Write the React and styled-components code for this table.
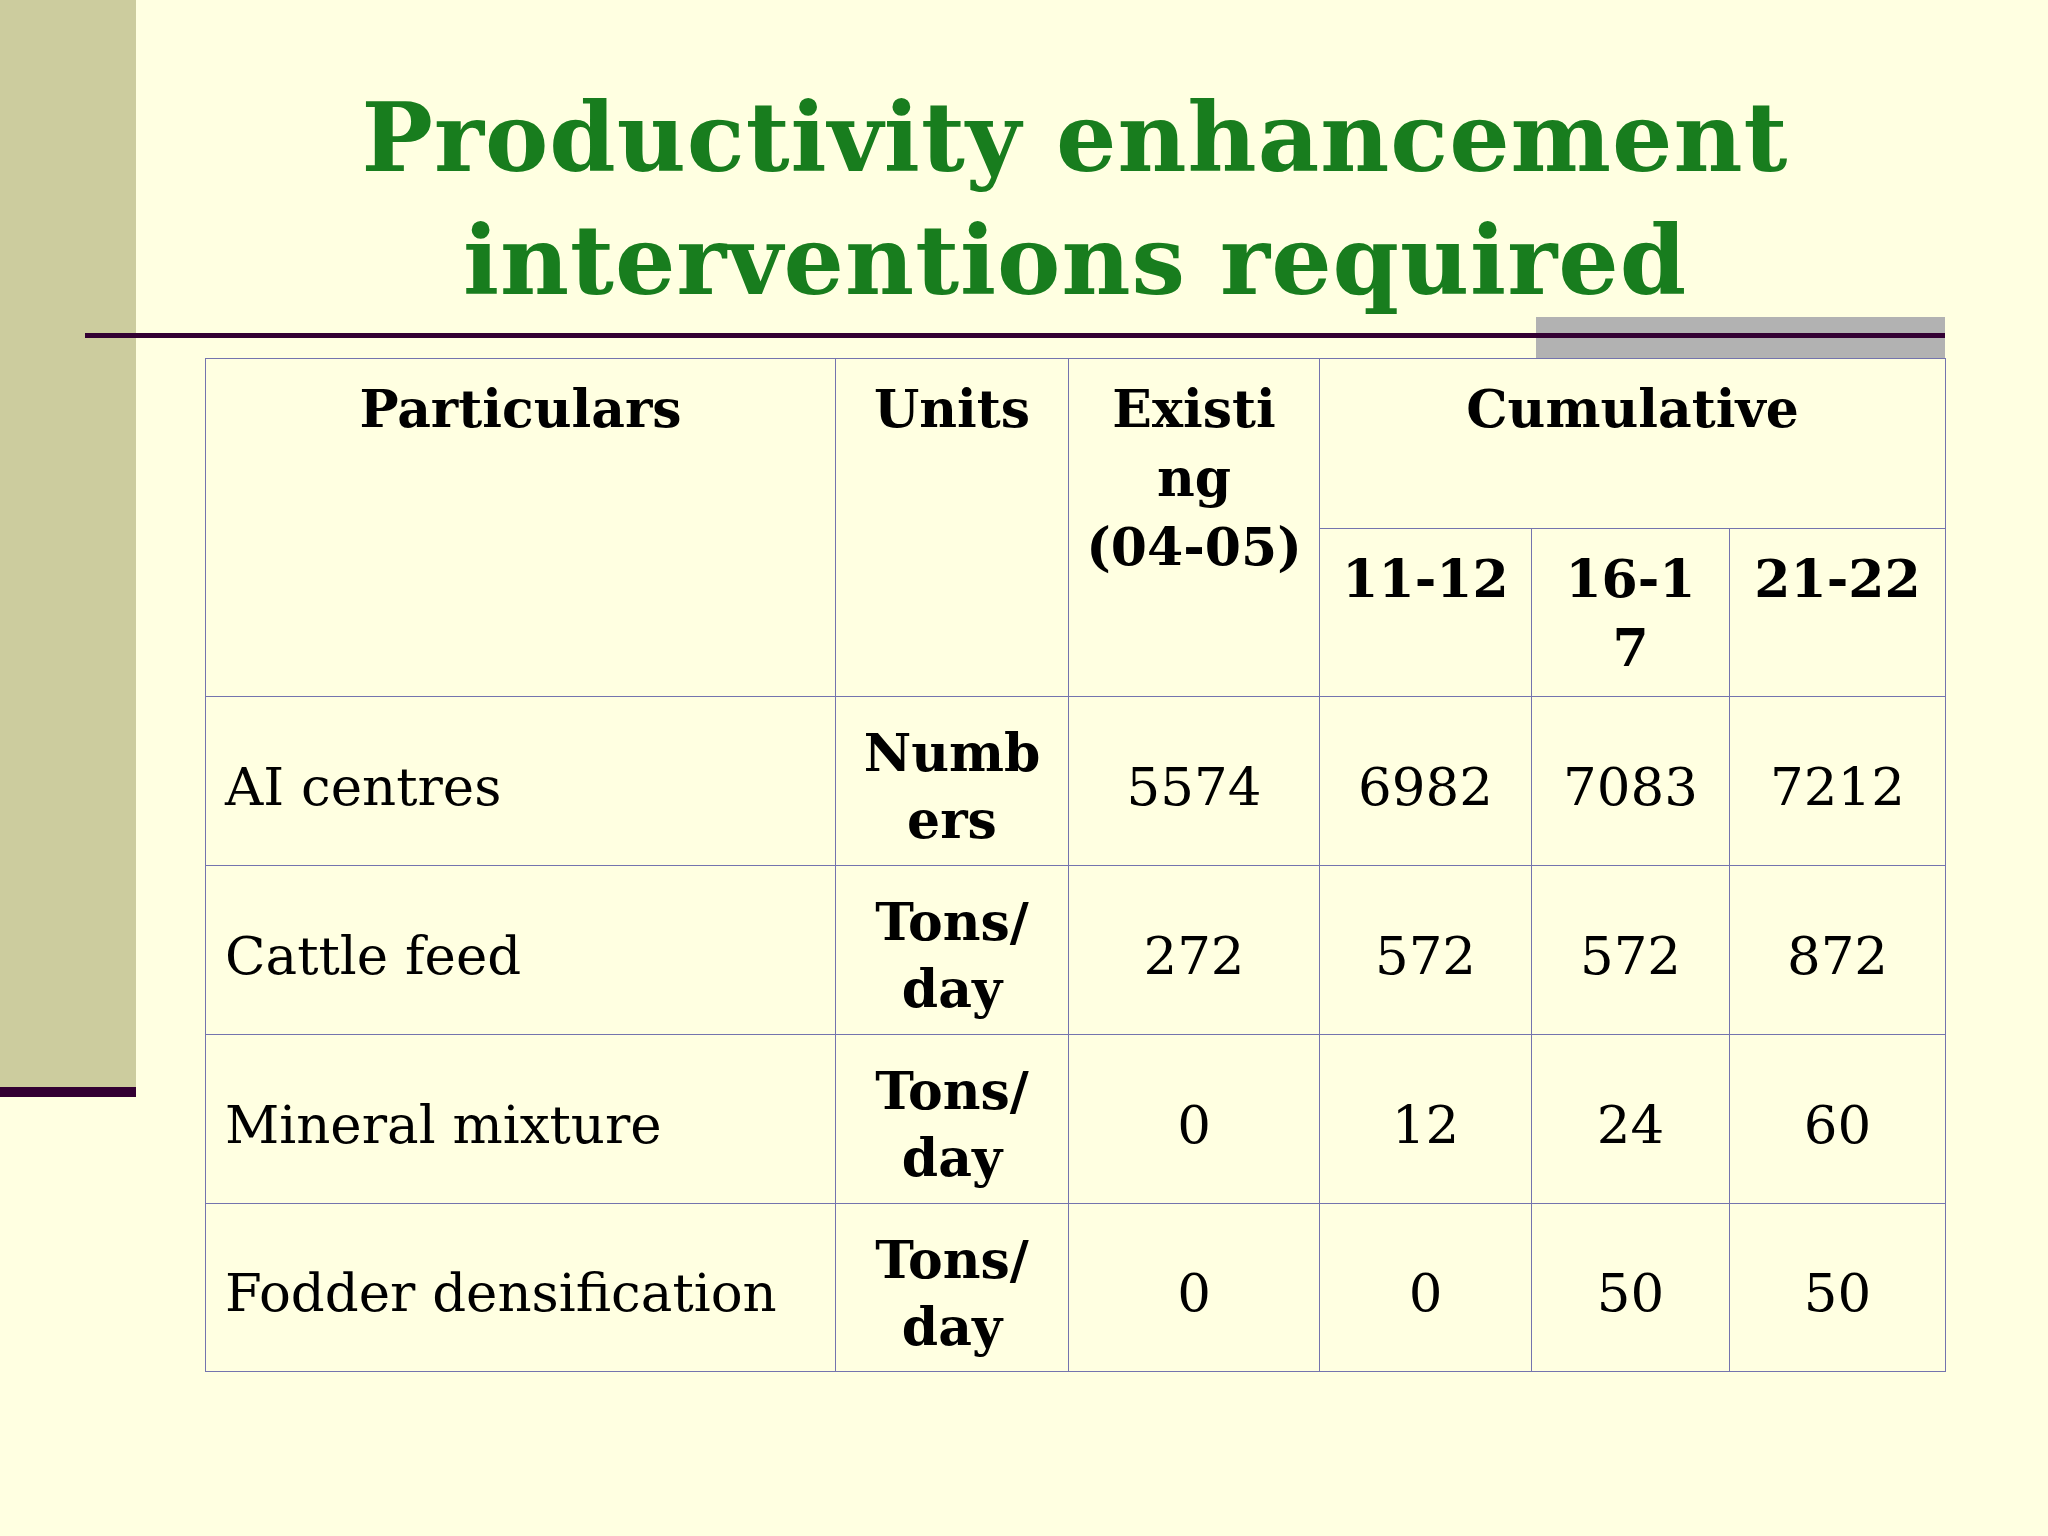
import React from "react";
import styled, { createGlobalStyle } from "styled-components";

const GlobalStyle = createGlobalStyle`
  html, body { margin: 0; padding: 0; background: #FFFFE1; }
  body { font-family: "DejaVu Serif", "Liberation Serif", serif; }
`;

const Slide = styled.div`
  width: 2048px;
  height: 1536px;
  display: flex;
  align-items: flex-start;
  background: #FFFFE1;
  overflow: hidden;
`;

const Sidebar = styled.aside`
  flex: 0 0 136px;
  height: 1087px;
  background: #CCCC9E;
  border-bottom: 10px solid #330033;
`;

const Main = styled.main`
  flex: 1;
  display: flex;
  flex-direction: column;
  padding: 76px 0 0 69px;
`;

const Title = styled.h1`
  margin: 0 0 -5px;
  width: 1740px;
  text-align: center;
  font-family: "DejaVu Serif", serif;
  font-weight: bold;
  font-size: 95px;
  letter-spacing: 1px;
  line-height: 123px;
  color: #187D1E;
`;

const RuleBand = styled.div`
  display: grid;
  grid-template: 41px / 1fr;
  margin-left: -120px;
  width: 1860px;
`;

const GreyBlock = styled.div`
  grid-area: 1 / 1;
  justify-self: end;
  width: 409px;
  height: 41px;
  background: #B2B2B2;
`;

const Rule = styled.div`
  grid-area: 1 / 1;
  align-self: start;
  margin-top: 16px;
  height: 5px;
  background: #330033;
`;

const Table = styled.table`
  width: 1740px;
  border-collapse: collapse;
  table-layout: fixed;
  font-family: "DejaVu Serif", serif;
  color: #000;
`;

const Col = styled.col`
  width: ${(p) => p.$w}px;
`;

const Row = styled.tr`
  height: ${(p) => p.$h}px;
`;

const HeadCell = styled.th`
  border: 1px solid #7474AE;
  font-weight: bold;
  font-size: 52px;
  line-height: 69px;
  vertical-align: top;
  text-align: center;
  padding: 15px 4px 0;
`;

const Cell = styled.td`
  border: 1px solid #7474AE;
  font-weight: ${(p) => (p.$bold ? "bold" : "normal")};
  font-size: ${(p) => (p.$bold ? 52 : 53)}px;
  line-height: 67px;
  vertical-align: middle;
  text-align: ${(p) => (p.$left ? "left" : "center")};
  padding: 10px ${(p) => (p.$left ? "8px 0 19px" : "4px 0")};
`;

const cols = [630, 233, 251, 212, 198, 216];

const rows = [
  { name: "AI centres", unit: ["Numb", "ers"], vals: ["5574", "6982", "7083", "7212"], h: 169 },
  { name: "Cattle feed", unit: ["Tons/", "day"], vals: ["272", "572", "572", "872"], h: 169 },
  { name: "Mineral mixture", unit: ["Tons/", "day"], vals: ["0", "12", "24", "60"], h: 169 },
  { name: "Fodder densification", unit: ["Tons/", "day"], vals: ["0", "0", "50", "50"], h: 168 },
];

export default function App() {
  return (
    <>
      <GlobalStyle />
      <Slide>
        <Sidebar />
        <Main>
          <Title>
            Productivity enhancement
            <br />
            interventions required
          </Title>
          <RuleBand>
            <GreyBlock />
            <Rule />
          </RuleBand>
          <Table>
            <colgroup>
              {cols.map((w, i) => (
                <Col key={i} $w={w} />
              ))}
            </colgroup>
            <thead>
              <Row $h={170}>
                <HeadCell rowSpan={2}>Particulars</HeadCell>
                <HeadCell rowSpan={2}>Units</HeadCell>
                <HeadCell rowSpan={2}>
                  Existi
                  <br />
                  ng
                  <br />
                  (04-05)
                </HeadCell>
                <HeadCell colSpan={3}>Cumulative</HeadCell>
              </Row>
              <Row $h={168}>
                <HeadCell>11-12</HeadCell>
                <HeadCell>
                  16-1
                  <br />7
                </HeadCell>
                <HeadCell>21-22</HeadCell>
              </Row>
            </thead>
            <tbody>
              {rows.map((r) => (
                <Row key={r.name} $h={r.h}>
                  <Cell $left>{r.name}</Cell>
                  <Cell $bold>
                    {r.unit[0]}
                    <br />
                    {r.unit[1]}
                  </Cell>
                  {r.vals.map((v, i) => (
                    <Cell key={i}>{v}</Cell>
                  ))}
                </Row>
              ))}
            </tbody>
          </Table>
        </Main>
      </Slide>
    </>
  );
}
